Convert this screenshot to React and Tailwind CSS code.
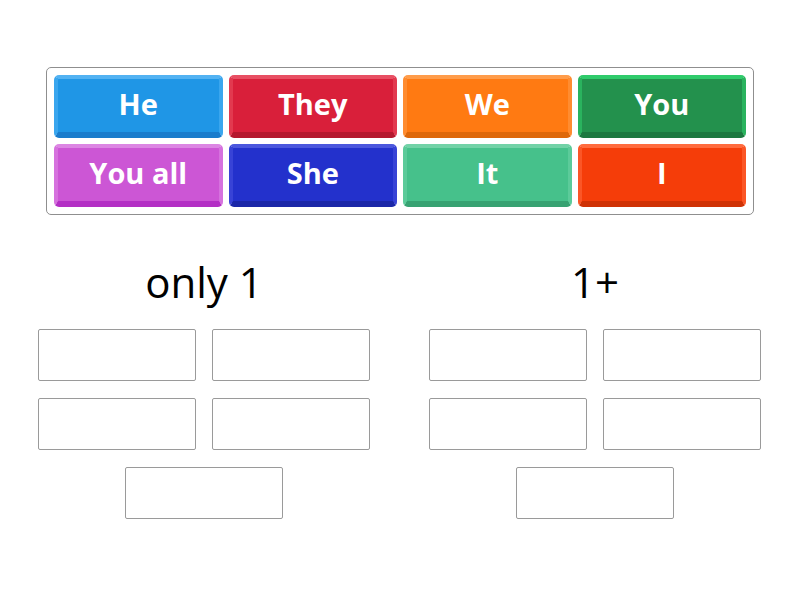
import React from "react";

// word tiles: face colour, rim (top/sides), bottom shade
const tiles = [
  { word: "He", face: "bg-[#1f96e6]", rim: "border-t-[#52b2f2] border-x-[#3aa6ee] border-b-[#1a7ccc]" },
  { word: "They", face: "bg-[#d91f3a]", rim: "border-t-[#e84f63] border-x-[#e2394f] border-b-[#b5182e]" },
  { word: "We", face: "bg-[#ff7a12]", rim: "border-t-[#ff9c4a] border-x-[#ff8c30] border-b-[#de680a]" },
  { word: "You", face: "bg-[#23914d]", rim: "border-t-[#2fcb6b] border-x-[#2ab35e] border-b-[#1c7840]" },
  { word: "You all", face: "bg-[#cc56d5]", rim: "border-t-[#dc86e3] border-x-[#d672de] border-b-[#b42fc5]" },
  { word: "She", face: "bg-[#2331cc]", rim: "border-t-[#4b57dd] border-x-[#3843d6] border-b-[#1b27a8]" },
  { word: "It", face: "bg-[#46c18b]", rim: "border-t-[#72d2a7] border-x-[#5ccb9a] border-b-[#37a272]" },
  { word: "I", face: "bg-[#f53d09]", rim: "border-t-[#ff6b3e] border-x-[#fb5626] border-b-[#cf3205]" },
];

const groups = ["only 1", "1+"];

function Tile({ word, face, rim }) {
  return (
    <div
      className={`h-[63px] rounded-[5px] border-t-[4px] border-x-[4px] border-b-[6px] ${rim} ${face} flex items-center justify-center`}
    >
      <span className="text-white font-bold text-[29px] leading-none pb-[5px]">{word}</span>
    </div>
  );
}

function DropGroup({ title }) {
  return (
    <div className="w-[332px] flex flex-col items-center">
      <div className="text-[42px] leading-[56px] text-black">{title}</div>
      <div className="mt-[19px] w-full flex flex-wrap justify-center gap-x-[16px] gap-y-[17px]">
        {[0, 1, 2, 3, 4].map((i) => (
          <div key={i} className="w-[158px] h-[52px] border border-[#9a9a9a] rounded-[2px] bg-white" />
        ))}
      </div>
    </div>
  );
}

export default function App() {
  return (
    <div
      className="w-[800px] h-[600px] bg-white overflow-hidden"
      style={{ fontFamily: '"Open Sans", "Liberation Sans", sans-serif' }}
    >
      <div className="mt-[67px] ml-[46px] w-[708px] border border-[#8f8f8f] rounded-[5px] px-[7px] py-[7px] grid grid-cols-4 gap-[6px]">
        {tiles.map((t) => (
          <Tile key={t.word} {...t} />
        ))}
      </div>

      <div className="mt-[39px] ml-[38px] flex gap-[59px]">
        {groups.map((g) => (
          <DropGroup key={g} title={g} />
        ))}
      </div>
    </div>
  );
}
